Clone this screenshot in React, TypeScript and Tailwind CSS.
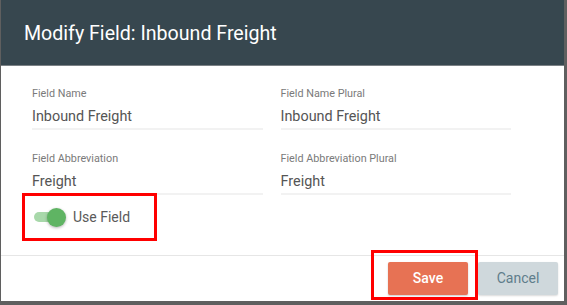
import React from 'react'

const FONT = { fontFamily: 'Roboto, "Liberation Sans", sans-serif' }

function Field({ label, value }: { label: string; value: string }) {
  return (
    <div className="flex flex-col">
      <span className="text-[10.8px] leading-[13px] text-[#7a7a7a]">{label}</span>
      <span className="mt-[7px] text-[14.4px] leading-[20px] text-[#555555] pb-[1px] border-b-2 border-[#f2f2f2]">
        {value}
      </span>
    </div>
  )
}

export default function App() {
  return (
    <div className="w-[567px] h-[305px] bg-[#5f5f5f] overflow-hidden" style={FONT}>
      <div className="ml-[1px] w-[563px] h-[301px] bg-white flex flex-col">
        {/* Header */}
        <div className="h-[66px] shrink-0 bg-[#37474f] border-b border-[#7b8185] px-[23px] flex items-center">
          <h1 className="text-[19.6px] leading-[28px] pt-[3px] text-white font-normal">
            Modify Field: Inbound Freight
          </h1>
        </div>

        {/* Body */}
        <div className="h-[189px] shrink-0 pt-[21px] flex flex-col">
          <div className="ml-[31px] w-[479px] grid grid-cols-2 gap-x-[18px] gap-y-[22px]">
            <Field label="Field Name" value="Inbound Freight" />
            <Field label="Field Name Plural" value="Inbound Freight" />
            <Field label="Field Abbreviation" value="Freight" />
            <Field label="Field Abbreviation Plural" value="Freight" />
          </div>

          {/* Use Field toggle (annotated) */}
          <div className="ml-[21px] -mt-[2px] w-[135px] h-[48px] border-[3px] border-[#ff0000] flex items-center pl-[9px]">
            <div className="relative w-[32px] h-[19px] flex items-center">
              <div className="w-[26px] h-[10px] rounded-full bg-[#a8d8aa]" />
              <div className="absolute left-[13px] top-0 w-[19px] h-[19px] rounded-full bg-[#5fb463] shadow-[0_1px_3px_rgba(0,0,0,0.3)]" />
            </div>
            <span className="ml-[7px] text-[14px] leading-[20px] text-[#5a5a5a]">Use Field</span>
          </div>
        </div>

        {/* Footer */}
        <div className="relative flex-1 border-t border-[#e6e6e6] flex items-center justify-end gap-[10px] pr-[6px]">
          <button className="w-[80px] h-[33px] rounded-[2px] bg-[#e77254] text-white text-[14px] font-medium shadow-[0_1px_2px_rgba(0,0,0,0.2)]">
            Save
          </button>
          <button className="w-[80px] h-[33px] rounded-[2px] bg-[#cfd8dc] text-[#607d8b] text-[14px] shadow-[0_1px_2px_rgba(0,0,0,0.15)]">
            Cancel
          </button>
          {/* annotation box around Save */}
          <div className="absolute left-[370px] top-[-6px] w-[107px] h-[50px] border-[3px] border-[#ff0000] pointer-events-none" />
        </div>
      </div>
    </div>
  )
}
